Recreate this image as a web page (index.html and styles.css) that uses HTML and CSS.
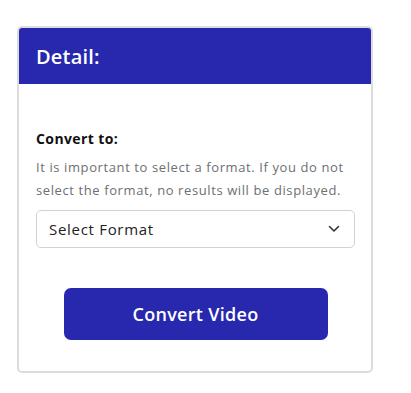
FILE: index.html
```html
<!DOCTYPE html>
<html>
<head>
<meta charset="utf-8">
<link rel="stylesheet" href="styles.css">
</head>
<body>
<div class="card">
  <div class="card-header">Detail:</div>
  <div class="card-body">
    <label class="label">Convert to:</label>
    <p class="hint">It is important to select a format. If you do not select the format, no results will be displayed.</p>
    <div class="select">
      <span>Select Format</span>
      <svg class="chev" width="12" height="8" viewBox="0 0 12 8"><path d="M1.5 1.5 L6 6 L10.5 1.5" fill="none" stroke="#333" stroke-width="1.6" stroke-linecap="round" stroke-linejoin="round"/></svg>
    </div>
    <div class="actions">
      <button class="btn">Convert Video</button>
    </div>
  </div>
</div>
</body>
</html>
```
FILE: styles.css
```css
html, body {
  margin: 0;
  padding: 0;
  background: #fff;
}
body {
  padding: 26px 0 0 17px;
  font-family: "Open Sans", "Liberation Sans", sans-serif;
}
.card {
  width: 352px;
  height: 343px;
  border: 2px solid #dcdcdc;
  border-radius: 5px;
  overflow: hidden;
  display: flex;
  flex-direction: column;
}
.card-header {
  background: #2828ae;
  color: #fff;
  height: 56px;
  display: flex;
  align-items: center;
  padding-left: 17px;
  font-size: 20px;
  font-weight: 600;
  letter-spacing: 0.2px;
}
.card-body {
  padding: 45px 16px 0 17px;
}
.label {
  display: block;
  font-size: 14px;
  font-weight: 700;
  color: #111;
  line-height: 20px;
  letter-spacing: 0.4px;
}
.hint {
  margin: 7px 0 0;
  font-size: 13px;
  line-height: 23px;
  color: #6c6f73;
  letter-spacing: 0.6px;
}
.select {
  margin-top: 8px;
  height: 36px;
  border: 1px solid #cfd2d6;
  border-radius: 5px;
  display: flex;
  align-items: center;
  justify-content: space-between;
  padding: 0 14px 0 12px;
  font-size: 15px;
  color: #222;
  letter-spacing: 0.7px;
}
.chev {
  display: block;
}
.actions {
  display: flex;
  justify-content: center;
  margin-top: 40px;
}
.btn {
  width: 264px;
  height: 52px;
  background: #2828ae;
  color: #fff;
  border: none;
  border-radius: 7px;
  font-family: inherit;
  font-size: 18px;
  font-weight: 600;
  letter-spacing: 0.3px;
}
```
